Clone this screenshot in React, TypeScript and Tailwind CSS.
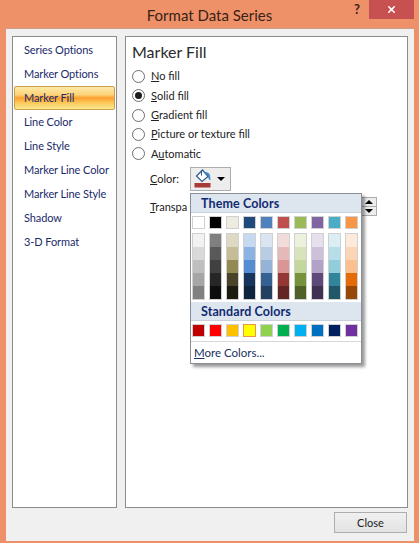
import React from 'react';
import { X } from 'lucide-react';

const navItems = ['Series Options', 'Marker Options', 'Marker Fill', 'Line Color', 'Line Style', 'Marker Line Color', 'Marker Line Style', 'Shadow', '3-D Format'];

const themeColors = ['#FFFFFF', '#000000', '#EEECE1', '#1F497D', '#4F81BD', '#C0504D', '#9BBB59', '#8064A2', '#4BACC6', '#F79646'];

const themeShades = [
  ['#F2F2F2', '#D9D9D9', '#BFBFBF', '#A6A6A6', '#808080'],
  ['#7F7F7F', '#595959', '#404040', '#262626', '#0D0D0D'],
  ['#DDD9C3', '#C4BD97', '#938953', '#494429', '#1D1B10'],
  ['#C6D9F0', '#8DB3E2', '#548DD4', '#17365D', '#0F243E'],
  ['#DBE5F1', '#B8CCE4', '#95B3D7', '#366092', '#244061'],
  ['#F2DCDB', '#E5B9B7', '#D99694', '#953734', '#632423'],
  ['#EBF1DD', '#D7E3BC', '#C3D69B', '#76923C', '#4F6128'],
  ['#E5E0EC', '#CCC1D9', '#B2A2C7', '#5F497A', '#3F3151'],
  ['#DBEEF3', '#B7DDE8', '#92CDDC', '#31859B', '#205867'],
  ['#FDEADA', '#FBD5B5', '#FAC08F', '#E36C09', '#974806'],
];

const standardColors = ['#C00000', '#FF0000', '#FFC000', '#FFFF00', '#92D050', '#00B050', '#00B0F0', '#0070C0', '#002060', '#7030A0'];

const Radio = ({ checked, label, hotkey }: { checked?: boolean; label: string; hotkey: number }) => (
  <div className="flex h-[19.3px] items-center">
    <span className="flex h-[13px] w-[13px] items-center justify-center rounded-full border border-[#6e6e6e] bg-white">
      {checked && <span className="h-[7px] w-[7px] rounded-full bg-[#1c1c1c]" />}
    </span>
    <span className="ml-[6px] text-[11px] text-[#222]">
      {label.slice(0, hotkey)}
      <span className="underline">{label[hotkey]}</span>
      {label.slice(hotkey + 1)}
    </span>
  </div>
);

const Swatch = ({ color, active }: { color: string; active?: boolean }) => (
  <span
    className={`block h-[13px] w-[13px] border ${active ? 'border-[#E8964A]' : 'border-[#d0d0d0]'}`}
    style={{ backgroundColor: color }}
  />
);

const ColorPopup = () => (
  <div className="absolute left-[64px] top-[156px] w-[172px] border border-[#8a8f96] bg-white shadow-[3px_3px_3px_rgba(0,0,0,0.4)]">
    <div className="h-[19px] border-b border-[#c8d0da] bg-[#dde6ee] pl-[10px] text-[12.5px] font-bold leading-[19px] tracking-[0.1px] text-[#102a72]">Theme Colors</div>
    <div className="flex gap-[4px] pl-[1px] pt-[3px]">
      {themeColors.map((c, i) => <Swatch key={i} color={c} />)}
    </div>
    <div className="flex gap-[4px] pl-[1px] pt-[4px]">
      {themeShades.map((col, i) => (
        <div key={i} className="w-[13px] border border-[#d0d0d0]">
          {col.map((c) => <span key={c} className="block h-[13px]" style={{ backgroundColor: c }} />)}
        </div>
      ))}
    </div>
    <div className="mt-[2px] h-[19px] border-b border-[#c8d0da] bg-[#dde6ee] pl-[10px] text-[12.5px] font-bold leading-[20px] tracking-[0.1px] text-[#102a72]">Standard Colors</div>
    <div className="flex gap-[4px] pl-[1px] pt-[3px]">
      {standardColors.map((c) => <Swatch key={c} color={c} active={c === '#FFFF00'} />)}
    </div>
    <div className="mt-[4px] border-t border-[#d8d8d8] pl-[3px] text-[11.5px] leading-[21px] text-[#20305f]">
      <span className="underline">M</span>ore Colors...
    </div>
  </div>
);

// paint bucket tipped to the right over the current colour bar
const BucketIcon = () => (
  <svg width="20" height="20" viewBox="0 0 20 20">
    <path d="M8.5 1 L2.5 7 L8 12.5 L14 7.5 Z" fill="#fff" stroke="#2a5a8c" strokeWidth="1.2" />
    <path d="M7.5 1.5 L7.5 6.5" stroke="#2a5a8c" strokeWidth="1" fill="none" />
    <path d="M10 3 C13 2.5 15.5 4 16 6.5 L16.5 11 C15 11.5 14.5 9.5 14 7.5 Z" fill="#3f86c4" />
    <rect x="0.5" y="14" width="16" height="4.5" fill="#A83A38" />
  </svg>
);

export default function App() {
  return (
    <div className="flex h-[543px] w-[419px] flex-col overflow-hidden bg-[#EE9169] font-['Lato',sans-serif]">
      {/* Title bar */}
      <div className="grid h-[28px] shrink-0 grid-cols-[1fr_auto_1fr] items-start">
        <div />
        <div className="pt-[5px] text-[15px] leading-[20px] text-[#3a2216]">Format Data Series</div>
        <div className="flex justify-end pr-[5px]">
          <span className="mr-[9px] mt-[1px] text-[13px] font-bold leading-[16px] text-[#3a2216]">?</span>
          <span className="flex h-[19px] w-[45px] items-center justify-center bg-[#C75050]">
            <X size={11} strokeWidth={3.5} className="text-white" />
          </span>
        </div>
      </div>

      {/* Dialog body */}
      <div className="ml-[6px] mr-[5px] flex h-[513px] shrink-0 flex-col border-t border-[#c9a08c] bg-[#f0f0f0] px-[6px] pt-[7px]">
        <div className="flex h-[472px] gap-[8px]">
          {/* Category list */}
          <div className="h-full w-[105px] border border-[#8b8b8b] bg-white px-[1px] pt-[1px]">
            {navItems.map((item) => (
              <div key={item} className="flex h-[24px] items-center whitespace-nowrap">
                {item === 'Marker Fill' ? (
                  <div className="flex h-[24px] w-full items-center rounded-[2px] border border-[#c9a050] bg-[linear-gradient(#fde9a8_0%,#fdd37a_35%,#fb9f2e_50%,#fdc657_70%,#fee88e_100%)] pl-[9px] text-[11px] tracking-[-0.1px] text-[#1b2a6b]">{item}</div>
                ) : (
                  <span className="pl-[10px] text-[11px] tracking-[-0.1px] text-[#1b2a6b]">{item}</span>
                )}
              </div>
            ))}
          </div>

          {/* Settings pane */}
          <div className="relative h-full w-[283px] border border-[#8b8b8b] bg-white pl-[6px] pt-[3px]">
            <div className="text-[16px] leading-[24px] text-[#2a2a2a]">Marker Fill</div>
            <div className="mt-[3px] flex flex-col">
              <Radio label="No fill" hotkey={0} />
              <Radio label="Solid fill" hotkey={0} checked />
              <Radio label="Gradient fill" hotkey={0} />
              <Radio label="Picture or texture fill" hotkey={0} />
              <Radio label="Automatic" hotkey={1} />
            </div>
            <div className="ml-[18px] mt-[4px] flex items-center">
              <span className="w-[40px] text-[11px] text-[#222]"><span className="underline">C</span>olor:</span>
              <span className="flex h-[24px] w-[41px] items-center gap-[3px] border border-[#adadad] bg-[#ededed] pl-[3px]">
                <BucketIcon />
                <span className="h-0 w-0 border-x-[4px] border-t-[4px] border-x-transparent border-t-black" />
              </span>
            </div>
            <div className="ml-[18px] mt-[7px] flex items-start">
              <span className="text-[11px] leading-[18px] text-[#222]"><span className="underline">T</span>ranspa</span>
              <div className="absolute left-[235px] top-[160px] flex h-[19px] w-[16px] flex-col border border-[#adadad] bg-[#ededed]">
                <span className="flex flex-1 items-center justify-center border-b border-[#adadad]">
                  <span className="h-0 w-0 border-x-[4px] border-b-[4px] border-x-transparent border-b-black" />
                </span>
                <span className="flex flex-1 items-center justify-center">
                  <span className="h-0 w-0 border-x-[4px] border-t-[4px] border-x-transparent border-t-black" />
                </span>
              </div>
            </div>
            <ColorPopup />
          </div>
        </div>

        {/* Footer */}
        <div className="flex justify-end pr-[1px] pt-[4px]">
          <button className="h-[21px] w-[73px] border border-[#adadad] bg-[linear-gradient(#f0f0f0,#e3e3e3)] text-[11px] leading-[18px] text-[#222]">Close</button>
        </div>
      </div>
    </div>
  );
}
